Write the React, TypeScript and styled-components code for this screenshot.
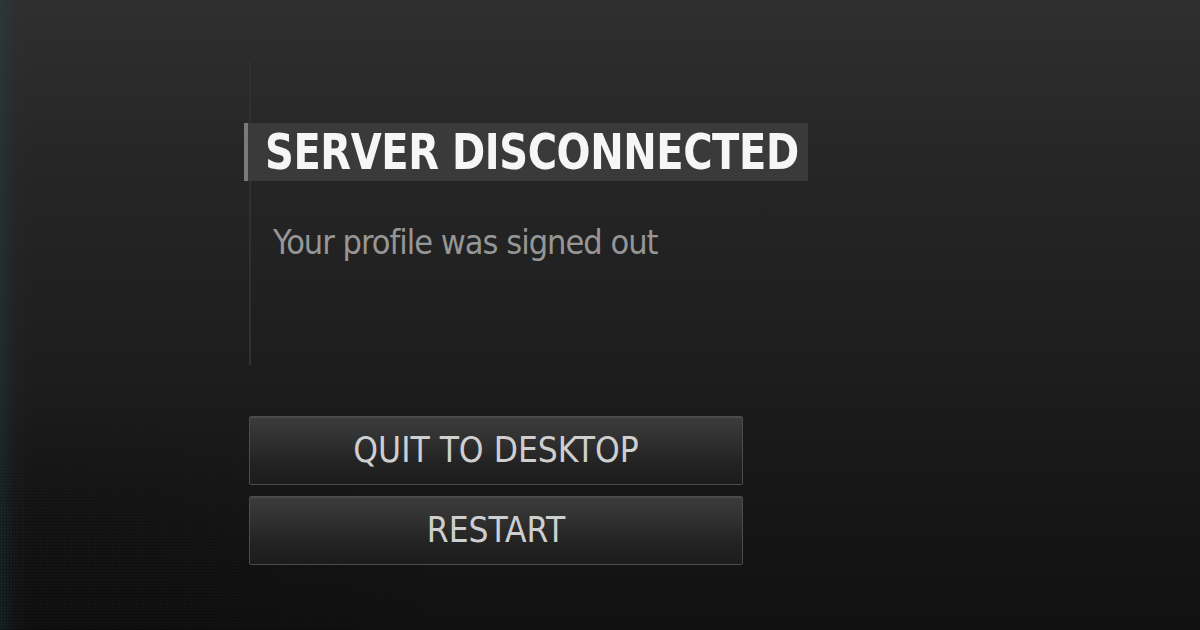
import React from "react";
import styled, { createGlobalStyle } from "styled-components";

const Global = createGlobalStyle`
  html, body { margin: 0; padding: 0; background: #151515; }
  body { width: 1200px; height: 630px; overflow: hidden; }
`;

const Screen = styled.div`
  position: relative;
  width: 1200px;
  height: 630px;
  overflow: hidden;
  box-sizing: border-box;
  padding: 60px 0 0 249px;
  display: flex;
  flex-direction: column;
  background:
    linear-gradient(90deg, rgba(40, 70, 70, 0.35) 0px, rgba(40, 60, 60, 0.12) 14px, rgba(0, 0, 0, 0) 30px),
    linear-gradient(180deg, #2f2f2f 0%, #262626 25%, #1e1e1e 55%, #161616 80%, #111111 100%);
  font-family: "DejaVu Sans", "Liberation Sans", sans-serif;
`;

const Dither = styled.div`
  position: absolute;
  left: 0;
  bottom: 0;
  width: 420px;
  height: 220px;
  z-index: 0;
  pointer-events: none;
  background:
    repeating-linear-gradient(90deg, rgba(0, 0, 0, 0.18) 0 1px, rgba(0, 0, 0, 0) 1px 3px),
    repeating-linear-gradient(0deg, rgba(0, 0, 0, 0.18) 0 1px, rgba(0, 0, 0, 0) 1px 3px);
  -webkit-mask-image: radial-gradient(ellipse at 0% 100%, #000 30%, transparent 75%);
  mask-image: radial-gradient(ellipse at 0% 100%, #000 30%, transparent 75%);
`;

const Panel = styled.div`
  position: relative;
  z-index: 1;
  height: 305px;
  box-sizing: border-box;
  border-left: 2px solid #303030;
  padding-top: 63px;
  display: flex;
  flex-direction: column;
  align-items: flex-start;
`;

const TitleBar = styled.div`
  margin-left: -7px;
  height: 58px;
  width: 564px;
  box-sizing: border-box;
  display: flex;
  align-items: center;
  background: #3a3a3a;
  border-left: 4px solid #7a7a7a;
  padding-left: 17px;
`;

const Title = styled.h1`
  margin: 0;
  display: inline-block;
  font-family: "DejaVu Sans", sans-serif;
  font-stretch: condensed;
  font-weight: 700;
  font-size: 50px;
  line-height: 1;
  color: #f6f6f6;
  white-space: nowrap;
  letter-spacing: -0.5px;
  transform: scaleX(0.89);
  transform-origin: left center;
`;

const Message = styled.p`
  margin: 44px 0 0 22px;
  font-family: "DejaVu Sans", sans-serif;
  font-stretch: condensed;
  font-size: 34px;
  line-height: 1;
  color: #969696;
  white-space: nowrap;
  letter-spacing: -1px;
`;

const Actions = styled.div`
  position: relative;
  z-index: 1;
  margin-top: 51px;
  display: flex;
  flex-direction: column;
  gap: 11px;
  width: 494px;
`;

const MenuButton = styled.button`
  height: 69px;
  width: 100%;
  box-sizing: border-box;
  border: 1px solid #4c4c4c;
  border-radius: 2px;
  background: linear-gradient(180deg, #3c3c3c 0%, #303030 35%, #222222 70%, #1c1c1c 100%);
  box-shadow: inset 0 1px 0 rgba(255, 255, 255, 0.08);
  color: #cfcfcf;
  font-family: "DejaVu Sans", sans-serif;
  font-stretch: condensed;
  font-size: 35px;
  letter-spacing: 0;
  line-height: 1;
  padding: 0;
  cursor: pointer;
`;

export default function App() {
  return (
    <>
      <Global />
      <Screen>
        <Dither />
        <Panel>
          <TitleBar>
            <Title>SERVER DISCONNECTED</Title>
          </TitleBar>
          <Message>Your profile was signed out</Message>
        </Panel>
        <Actions>
          <MenuButton>QUIT TO DESKTOP</MenuButton>
          <MenuButton>RESTART</MenuButton>
        </Actions>
      </Screen>
    </>
  );
}
